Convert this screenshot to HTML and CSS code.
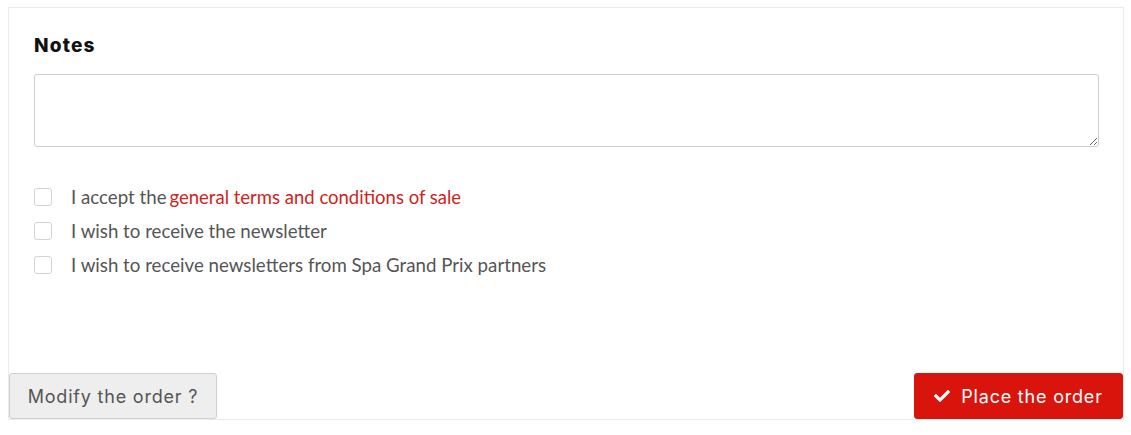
FILE: index.html
```html
<!DOCTYPE html>
<html lang="en">
<head>
    <meta charset="UTF-8">
    <title>Order notes</title>
    <link rel="stylesheet" href="styles.css">
</head>
<body>
    <div class="card">
        <div class="card-body">
            <h3 class="title">Notes</h3>
            <textarea class="notes"></textarea>

            <ul class="options">
                <li><label><span class="box"></span>I accept the <a href="#">general terms and conditions of sale</a></label></li>
                <li><label><span class="box"></span>I wish to receive the newsletter</label></li>
                <li><label><span class="box"></span>I wish to receive newsletters from Spa Grand Prix partners</label></li>
            </ul>
        </div>

        <div class="actions">
            <button class="btn btn-modify">Modify the order ?</button>
            <button class="btn btn-order">
                <svg class="check" viewBox="0 0 512 512" width="16" height="16"><path fill="#fff" d="M173.9 439.4L7.5 273c-10-10-10-26.2 0-36.2l36.2-36.2c10-10 26.2-10 36.2 0L192 312.7 432.1 72.6c10-10 26.2-10 36.2 0l36.2 36.2c10 10 10 26.2 0 36.2L210.1 439.4c-10 10-26.2 10-36.2 0z"/></svg>
                Place the order
            </button>
        </div>
    </div>
</body>
</html>
```
FILE: styles.css
```css
* {
    margin: 0;
    padding: 0;
    box-sizing: border-box;
}

body {
    background: #fff;
    font-family: Lato, 'Open Sans', sans-serif;
}

.card {
    margin: 7px 7px 0 8px;
    height: 413px;
    border: 1px solid #ebebeb;
    display: flex;
    flex-direction: column;
}

.card-body {
    padding: 27px 24px 0 25px;
}

.title {
    font-family: Inter, 'Noto Sans', sans-serif;
    font-weight: 800;
    font-size: 19px;
    letter-spacing: 1.2px;
    color: #111;
    line-height: 22px;
    margin-bottom: 17px;
}

.notes {
    display: block;
    width: 100%;
    height: 73px;
    border: 1px solid #ccc;
    border-radius: 3px;
    resize: vertical;
}

.options {
    list-style: none;
    margin-top: 39px;
}

.options li {
    height: 34px;
}

.options label {
    display: flex;
    align-items: center;
    font-size: 18.7px;
    color: #555;
    height: 22px;
}

.options a {
    color: #d0231c;
    text-decoration: none;
    margin-left: 3px;
    font-size: 18.5px;
}

.box {
    width: 18px;
    height: 18px;
    border: 1px solid #d3d3d3;
    border-radius: 3px;
    margin-right: 19px;
    flex-shrink: 0;
}

.actions {
    margin-top: auto;
    display: flex;
    justify-content: space-between;
    align-items: flex-end;
}

.btn {
    height: 46px;
    width: 208px;
    border-radius: 3px;
    font-family: Inter, 'Noto Sans', sans-serif;
    font-size: 18px;
    letter-spacing: 0.8px;
    cursor: pointer;
    display: flex;
    align-items: center;
    justify-content: center;
}

.btn-modify {
    background: #eeeeee;
    border: 1px solid #cfcfcf;
    color: #555;
}

.btn-order {
    background: #d9140c;
    border: 1px solid #d9140c;
    color: #fff;
    width: 209px;
}

.check {
    margin-right: 11px;
}
```
